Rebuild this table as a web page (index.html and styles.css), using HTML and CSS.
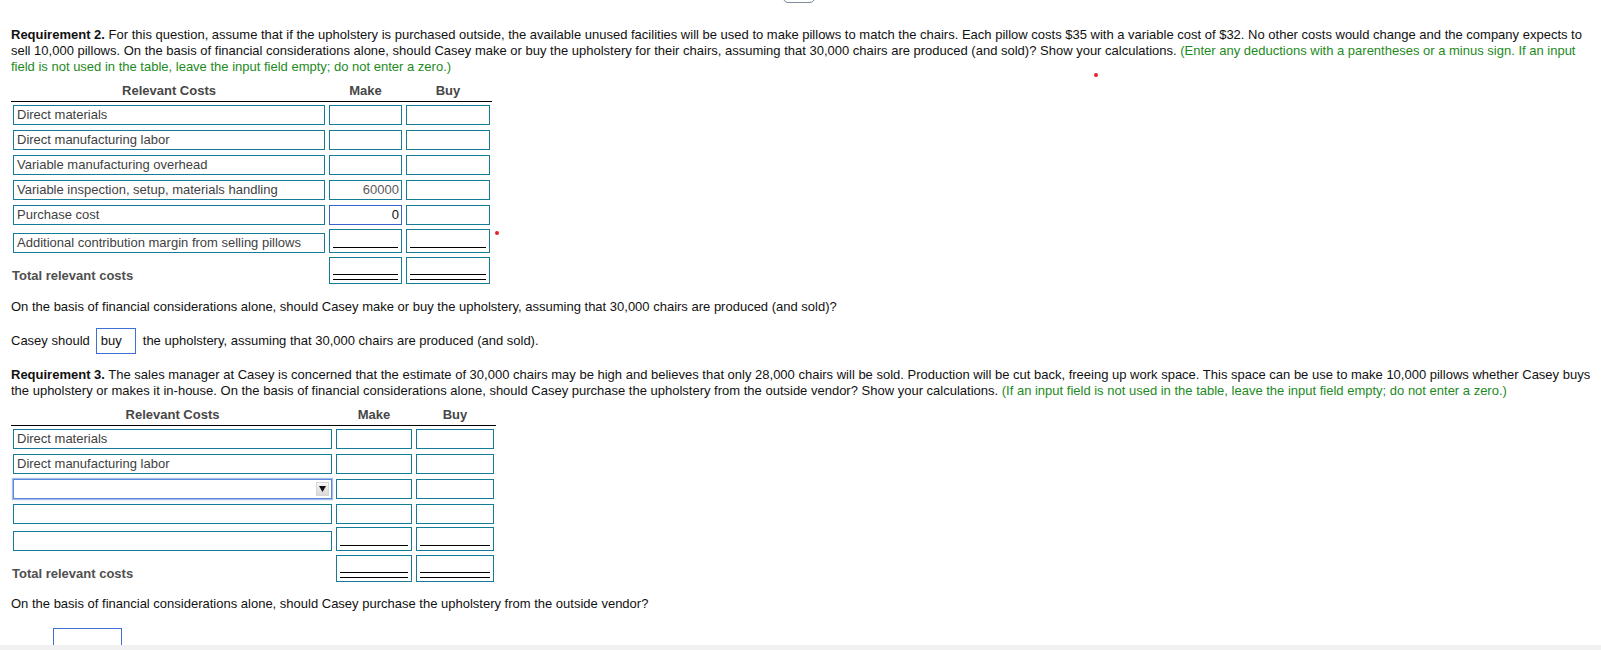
FILE: index.html
```html
<!DOCTYPE html>
<html lang="en">
<head>
<meta charset="utf-8">
<title>Make or Buy</title>
<link rel="stylesheet" href="styles.css">
</head>
<body>
<div class="page">
  <div class="top-tab"></div>
  <span class="dot dot-top"></span>

  <p class="req"><b>Requirement 2.</b> For this question, assume that if the upholstery is purchased outside, the available unused facilities will be used to make pillows to match the chairs. Each pillow costs $35 with a variable cost of $32. No other costs would change and the company expects to sell 10,000 pillows. On the basis of financial considerations alone, should Casey make or buy the upholstery for their chairs, assuming that 30,000 chairs are produced (and sold)? Show your calculations. <span class="note">(Enter any deductions with a parentheses or a minus sign. If an input field is not used in the table, leave the input field empty; do not enter a zero.)</span></p>

  <div class="cost-table t1">
    <div class="row head"><div>Relevant Costs</div><div>Make</div><div>Buy</div></div>
    <div class="row"><div class="field">Direct materials</div><div class="field num"></div><div class="field num"></div></div>
    <div class="row"><div class="field">Direct manufacturing labor</div><div class="field num"></div><div class="field num"></div></div>
    <div class="row"><div class="field">Variable manufacturing overhead</div><div class="field num"></div><div class="field num"></div></div>
    <div class="row"><div class="field">Variable inspection, setup, materials handling</div><div class="field num grey">60000</div><div class="field num"></div></div>
    <div class="row"><div class="field">Purchase cost</div><div class="field num focus">0</div><div class="field num"></div></div>
    <div class="row sub"><div class="field">Additional contribution margin from selling pillows</div><div class="field num"></div><div class="field num"></div><span class="dot dot-row"></span></div>
    <div class="row total"><div class="total-label">Total relevant costs</div><div class="field num"></div><div class="field num"></div></div>
  </div>

  <p class="q">On the basis of financial considerations alone, should Casey make or buy the upholstery, assuming that 30,000 chairs are produced (and sold)?</p>

  <div class="answer">Casey should <span class="ans-box">buy</span> the upholstery, assuming that 30,000 chairs are produced (and sold).</div>

  <p class="req req3"><b>Requirement 3.</b> The sales manager at Casey is concerned that the estimate of 30,000 chairs may be high and believes that only 28,000 chairs will be sold. Production will be cut back, freeing up work space. This space can be use to make 10,000 pillows whether Casey buys the upholstery or makes it in-house. On the basis of financial considerations alone, should Casey purchase the upholstery from the outside vendor? Show your calculations. <span class="note">(If an input field is not used in the table, leave the input field empty; do not enter a zero.)</span></p>

  <div class="cost-table t2">
    <div class="row head"><div>Relevant Costs</div><div>Make</div><div>Buy</div></div>
    <div class="row"><div class="field">Direct materials</div><div class="field num"></div><div class="field num"></div></div>
    <div class="row"><div class="field">Direct manufacturing labor</div><div class="field num"></div><div class="field num"></div></div>
    <div class="row"><div class="select"><span class="select-btn"><svg width="7" height="6" viewBox="0 0 7 6"><path d="M0 0H7L3.5 6Z" fill="#111"/></svg></span></div><div class="field num"></div><div class="field num"></div></div>
    <div class="row"><div class="field"></div><div class="field num"></div><div class="field num"></div></div>
    <div class="row sub"><div class="field"></div><div class="field num"></div><div class="field num"></div></div>
    <div class="row total"><div class="total-label">Total relevant costs</div><div class="field num"></div><div class="field num"></div></div>
  </div>

  <p class="q">On the basis of financial considerations alone, should Casey purchase the upholstery from the outside vendor?</p>

  <div class="ans-bottom"></div>
</div>
<div class="footer-bar"></div>
</body>
</html>
```

FILE: styles.css
```css
* { box-sizing: border-box; }
html, body {
  margin: 0;
  overflow: hidden;
  background: #fff;
}
body {
  font-family: "Liberation Sans", Arial, sans-serif;
  font-size: 13px;
  line-height: 16px;
  color: #111;
}
.page {
  position: relative;
  height: 650px;
  padding: 27px 4px 0 11px;
}
.top-tab {
  position: absolute;
  left: 783px;
  top: -5px;
  width: 32px;
  height: 8px;
  border: 1px solid #7d8c9c;
  border-radius: 0 0 5px 5px;
}
.dot {
  position: absolute;
  width: 4px;
  height: 4px;
  border-radius: 50%;
  background: #e3232a;
}
.dot-top { left: 1094px; top: 73px; }
.req { margin: 0; }
.req3 { margin-top: 13px; }
.note { color: #1d8a1d; }
.q { margin: 15px 0 0; }
.t2 + .q { margin-top: 14px; }

.cost-table {
  width: max-content;
  padding: 0 2px;
  margin-top: 8px;
}
.t1 { --cols: 312px 73px 84px; }
.t2 { --cols: 319px 76px 78px; }
.row {
  position: relative;
  display: grid;
  grid-template-columns: var(--cols);
  column-gap: 4px;
  align-items: end;
  margin-top: 5px;
}
.head {
  margin: 0 -2px;
  padding: 0 2px 2px;
  border-bottom: 1px solid #000;
  font-weight: bold;
  color: #474747;
  text-align: center;
}
.head + .row { margin-top: 3px; }
.field {
  height: 20px;
  border: 1px solid #147c97;
  background: #fff;
  padding: 0 3px;
  line-height: 18px;
  color: #3f3f3f;
  white-space: nowrap;
  overflow: hidden;
}
.num {
  text-align: right;
  padding-right: 2px;
}
.grey { color: #5a5a5a; }
.focus { border-color: #3b63c9; color: #111; }
.sub { margin-top: 4px; }
.t2 .sub { margin-top: 3px; }
.sub .num { height: 24px; position: relative; }
.sub .num::after {
  content: "";
  position: absolute;
  left: 3px;
  right: 3px;
  bottom: 4px;
  border-bottom: 1px solid #000;
}
.dot-row { left: 482px; top: 2px; }
.total { margin-top: 4px; }
.total .num { height: 27px; position: relative; }
.total .num::after {
  content: "";
  position: absolute;
  left: 3px;
  right: 3px;
  bottom: 3px;
  height: 4px;
  border-top: 1px solid #000;
  border-bottom: 1px solid #000;
}
.total-label {
  font-weight: bold;
  color: #4f4f4f;
  margin-left: -1px;
}
.select {
  height: 20px;
  border: 1px solid #5b87d8;
  box-shadow: 0 0 1px 1px rgba(90, 135, 220, 0.55);
  background: #fff;
  display: flex;
  justify-content: flex-end;
  align-items: center;
  padding-right: 2px;
}
.select-btn {
  width: 13px;
  height: 14px;
  background: linear-gradient(#f6f6f6, #d9d9d9);
  border: 1px solid #d6d6d6;
  display: flex;
  align-items: center;
  justify-content: center;
}
.answer {
  display: flex;
  align-items: center;
  height: 26px;
  margin-top: 13px;
}
.ans-box {
  width: 40px;
  height: 26px;
  border: 1px solid #3f6fd1;
  margin: 0 7px 0 6px;
  padding-left: 4px;
  display: flex;
  align-items: center;
}
.ans-bottom {
  width: 69px;
  height: 26px;
  margin: 16px 0 0 42px;
  border: 1px solid #3f6fd1;
}
.footer-bar {
  position: fixed;
  left: 0;
  right: 0;
  bottom: 0;
  height: 5px;
  background: #f1f1f1;
}
```
